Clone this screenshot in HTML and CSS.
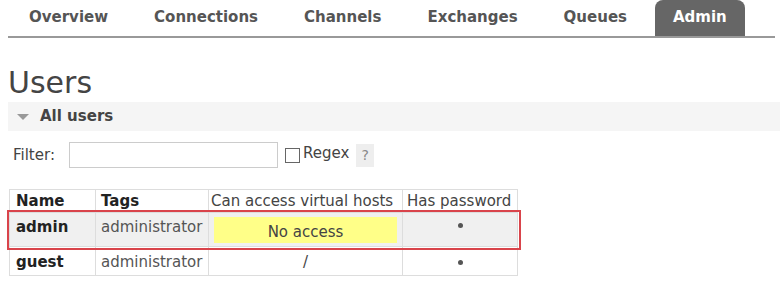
FILE: index.html
```html
<!DOCTYPE html>
<html lang="en">
<head>
    <meta charset="UTF-8">
    <meta name="viewport" content="width=device-width, initial-scale=1.0">
    <title>RabbitMQ Management - Users</title>
    <link rel="stylesheet" href="styles.css">
</head>
<body>

<div class="menu">
    <ul class="tabs">
        <li><a href="#">Overview</a></li>
        <li><a href="#">Connections</a></li>
        <li><a href="#">Channels</a></li>
        <li><a href="#">Exchanges</a></li>
        <li><a href="#">Queues</a></li>
        <li class="selected"><a href="#">Admin</a></li>
    </ul>
</div>

<div class="main">
    <h1>Users</h1>
    <div class="section">
        <h2><span class="arrow"></span>All users</h2>
        <div class="filter">
            <label for="filter">Filter:</label>
            <input type="text" id="filter">
            <input type="checkbox" id="regex">
            <label for="regex" class="regex">Regex</label>
            <span class="help">?</span>
        </div>

        <table class="list">
            <thead>
                <tr>
                    <th class="bold col-name">Name</th>
                    <th class="bold col-tags">Tags</th>
                    <th class="col-vhosts">Can access virtual hosts</th>
                    <th class="col-pass">Has password</th>
                </tr>
            </thead>
            <tbody>
                <tr class="alt highlight">
                    <td class="name">admin</td>
                    <td class="tags">administrator</td>
                    <td class="c"><span class="warning">No access</span></td>
                    <td class="c"><span class="dot"></span></td>
                </tr>
                <tr>
                    <td class="name">guest</td>
                    <td class="tags">administrator</td>
                    <td class="c">/</td>
                    <td class="c"><span class="dot"></span></td>
                </tr>
            </tbody>
        </table>
    </div>
</div>

</body>
</html>
```

FILE: styles.css
```css
body {
    font-family: "DejaVu Sans", Verdana, sans-serif;
    font-size: 15px;
    color: #444;
    margin: 0;
    background: #fff;
}
a {
    color: inherit;
    text-decoration: none;
}
.menu {
    margin: 0 5px 0 8px;
    border-bottom: 2px solid #999;
}
.tabs {
    list-style: none;
    margin: 0;
    padding: 0;
    display: flex;
}
.tabs li a {
    display: block;
    padding: 8px 21px 10px;
    margin-right: 4px;
    font-weight: bold;
    font-size: 15px;
    color: #555;
    line-height: 18px;
    border-radius: 8px 8px 0 0;
}
.tabs li.selected {
    margin-left: 3px;
}
.tabs li.selected a {
    background: #666;
    color: #fff;
    padding: 8px 18px 10px;
}
.main {
    padding: 0 0 0 8px;
}
h1 {
    font-size: 30px;
    font-weight: normal;
    color: #444;
    margin: 28px 0 2px;
    line-height: 34px;
}
h2 {
    font-size: 15px;
    font-weight: bold;
    color: #444;
    background: #f5f5f5;
    margin: 0;
    padding: 6px 0 6px 9px;
    line-height: 17px;
    display: flex;
    align-items: center;
}
.arrow {
    width: 0;
    height: 0;
    border-left: 6px solid transparent;
    border-right: 6px solid transparent;
    border-top: 6px solid #999;
    margin-right: 11px;
}
.filter {
    display: flex;
    align-items: center;
    margin: 11px 0 0 5px;
    height: 26px;
}
.filter label {
    margin-right: 14px;
}
#filter {
    width: 209px;
    height: 26px;
    box-sizing: border-box;
    border: 1px solid #ccc;
    margin: 0;
}
#regex {
    appearance: none;
    width: 15px;
    height: 15px;
    border: 1px solid #666;
    margin: 0 3px 0 7px;
    background: #fff;
}
.filter .regex {
    margin-right: 7px;
    position: relative;
    top: -2px;
}
.help {
    display: inline-block;
    background: #eee;
    color: #888;
    width: 18px;
    height: 23px;
    line-height: 23px;
    text-align: center;
    font-size: 14px;
}
table.list {
    border-collapse: collapse;
    margin: 21px 0 0 1px;
    table-layout: fixed;
}
table.list th,
table.list td {
    box-sizing: border-box;
    border: 1px solid #ddd;
    padding: 6px 4px 4px;
    text-align: left;
    font-weight: normal;
    color: #444;
    line-height: 18px;
    white-space: nowrap;
}
table.list th {
    padding: 2px 4px;
}
table.list th.bold,
table.list td.name {
    font-weight: bold;
    color: #222;
    padding-left: 6px;
}
table.list th.col-tags,
table.list td.tags {
    padding-left: 5px;
    color: #555;
}
table.list th.col-tags {
    color: #222;
}
table.list th.col-vhosts {
    padding-left: 2px;
}
.col-name { width: 86px; }
.col-tags { width: 113px; }
.col-vhosts { width: 194px; }
.col-pass { width: 115px; }
table.list td.c {
    text-align: center;
}
.dot {
    display: inline-block;
    width: 5px;
    height: 5px;
    border-radius: 50%;
    background: #555;
    vertical-align: middle;
}
tr.alt td {
    background: #f0f0f0;
}
tr.highlight {
    outline: 2px solid #d9444b;
    outline-offset: 1px;
}
tr.highlight td {
    height: 34px;
    vertical-align: top;
    padding-top: 5px;
}
tr.highlight td.c {
    padding: 4px 5px 3px;
}
tr.highlight td.c .dot {
    margin-top: 6px;
    vertical-align: top;
}
.warning {
    display: block;
    background: #ffff88;
    height: 26px;
    line-height: 30px;
}
```
